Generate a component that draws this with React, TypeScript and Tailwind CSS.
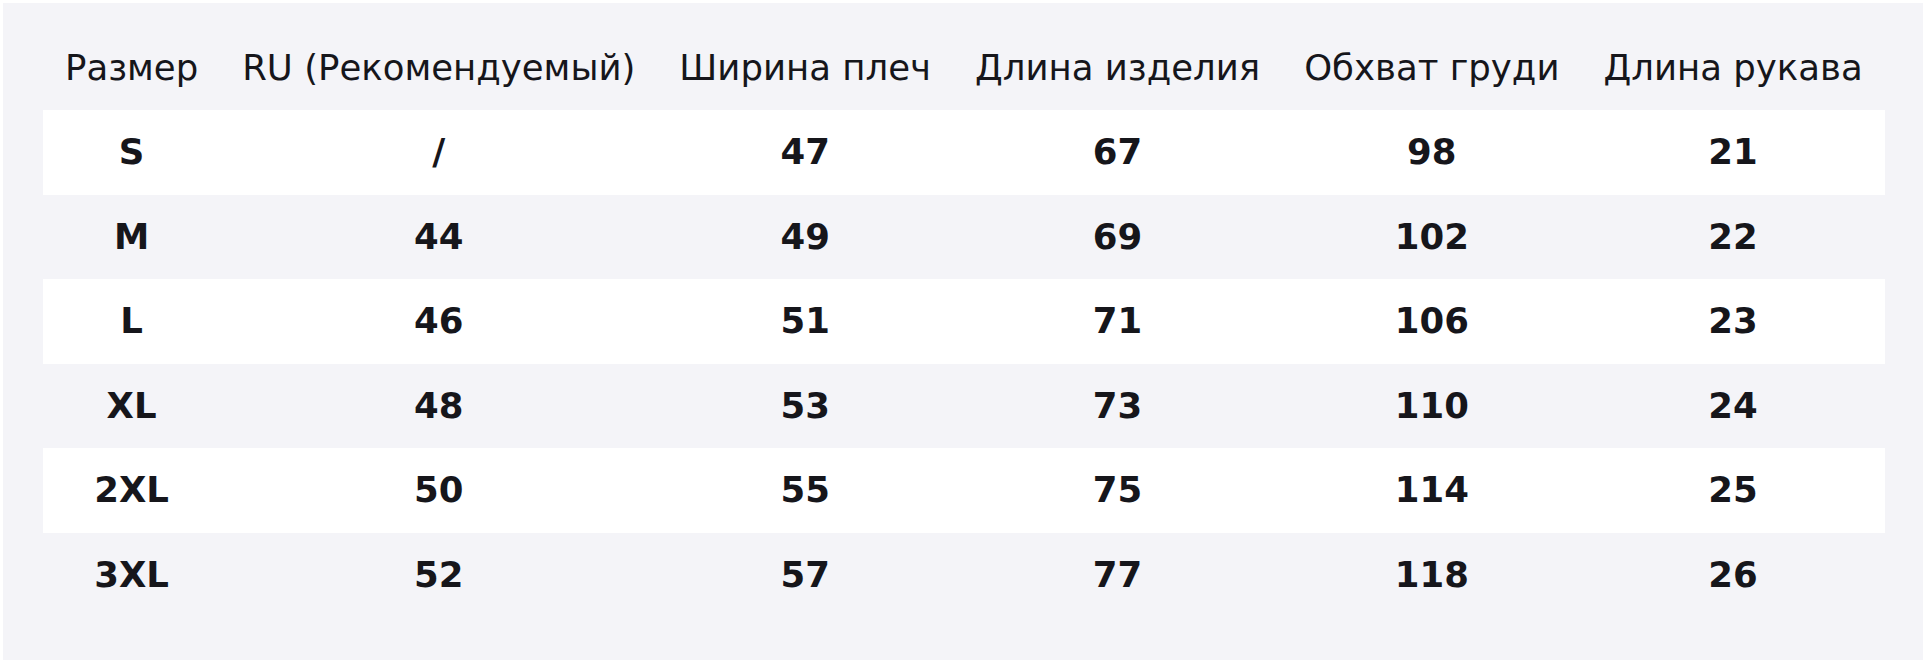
const headers = [
  "Размер",
  "RU (Рекомендуемый)",
  "Ширина плеч",
  "Длина изделия",
  "Обхват груди",
  "Длина рукава",
];

const rows: string[][] = [
  ["S", "/", "47", "67", "98", "21"],
  ["M", "44", "49", "69", "102", "22"],
  ["L", "46", "51", "71", "106", "23"],
  ["XL", "48", "53", "73", "110", "24"],
  ["2XL", "50", "55", "75", "114", "25"],
  ["3XL", "52", "57", "77", "118", "26"],
];

const App = () => {
  return (
    <div className="bg-white p-[3px] w-[1926px] h-[663px]">
      <div
        className="bg-[#f4f4f8] h-[657px] pt-[40px] px-[40px] text-[#16161b]"
        style={{ fontFamily: '"DejaVu Sans", sans-serif' }}
      >
        <table className="border-collapse">
          <thead>
            <tr>
              {headers.map((h) => (
                <th
                  key={h}
                  className="h-[67px] px-[22px] pt-[4px] align-top text-[35.5px] leading-[42px] font-normal whitespace-nowrap"
                >
                  {h}
                </th>
              ))}
            </tr>
          </thead>
          <tbody>
            {rows.map((row, index) => (
              <tr key={index} className={index % 2 === 0 ? "bg-white" : ""}>
                {row.map((cell, i) => (
                  <td
                    key={i}
                    className="h-[84.5px] px-[22px] py-0 text-center align-middle text-[35.5px] leading-[42px] font-bold"
                  >
                    {cell}
                  </td>
                ))}
              </tr>
            ))}
          </tbody>
        </table>
      </div>
    </div>
  );
};

export default App;
